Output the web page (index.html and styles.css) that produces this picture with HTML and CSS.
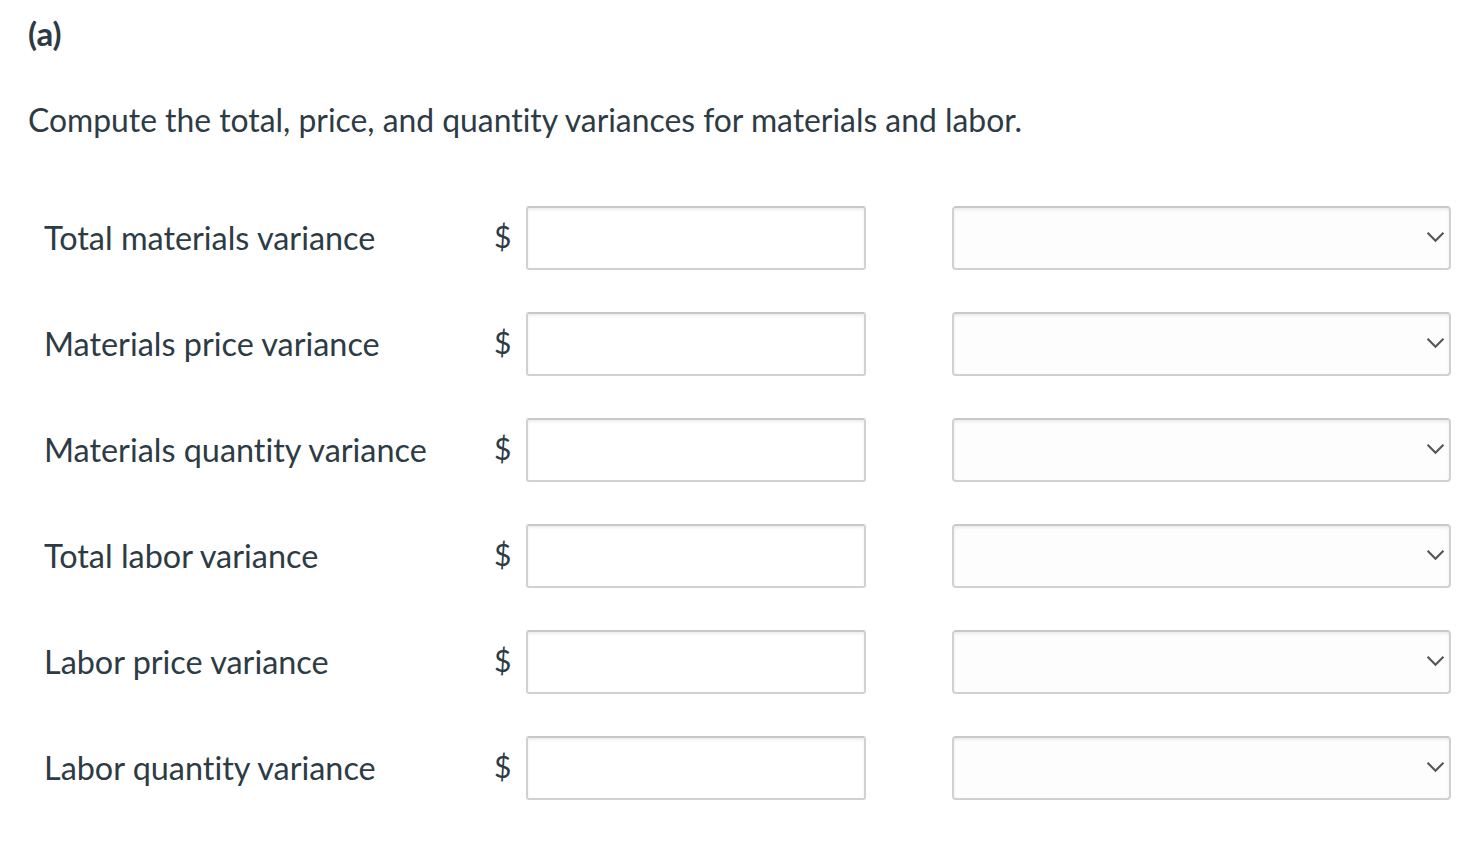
FILE: index.html
```html
<!DOCTYPE html>
<html>
<head>
<meta charset="utf-8">
<link rel="stylesheet" href="styles.css">
</head>
<body>
<div class="page">
  <div class="part">(a)</div>
  <p class="question">Compute the total, price, and quantity variances for materials and labor.</p>
  <div class="rows">
    <div class="row">
      <div class="label">Total materials variance</div>
      <div class="dollar">$</div>
      <div class="input"></div>
      <div class="select"><svg class="chev" viewBox="0 0 18 11"><path d="M1.5 1.5 L9 9 L16.5 1.5" /></svg></div>
    </div>
    <div class="row">
      <div class="label">Materials price variance</div>
      <div class="dollar">$</div>
      <div class="input"></div>
      <div class="select"><svg class="chev" viewBox="0 0 18 11"><path d="M1.5 1.5 L9 9 L16.5 1.5" /></svg></div>
    </div>
    <div class="row">
      <div class="label">Materials quantity variance</div>
      <div class="dollar">$</div>
      <div class="input"></div>
      <div class="select"><svg class="chev" viewBox="0 0 18 11"><path d="M1.5 1.5 L9 9 L16.5 1.5" /></svg></div>
    </div>
    <div class="row">
      <div class="label">Total labor variance</div>
      <div class="dollar">$</div>
      <div class="input"></div>
      <div class="select"><svg class="chev" viewBox="0 0 18 11"><path d="M1.5 1.5 L9 9 L16.5 1.5" /></svg></div>
    </div>
    <div class="row">
      <div class="label">Labor price variance</div>
      <div class="dollar">$</div>
      <div class="input"></div>
      <div class="select"><svg class="chev" viewBox="0 0 18 11"><path d="M1.5 1.5 L9 9 L16.5 1.5" /></svg></div>
    </div>
    <div class="row">
      <div class="label">Labor quantity variance</div>
      <div class="dollar">$</div>
      <div class="input"></div>
      <div class="select"><svg class="chev" viewBox="0 0 18 11"><path d="M1.5 1.5 L9 9 L16.5 1.5" /></svg></div>
    </div>
  </div>
</div>
</body>
</html>
```
FILE: styles.css
```css
html, body {
  margin: 0;
  padding: 0;
  background: #ffffff;
}
.page {
  font-family: Lato, "Open Sans", sans-serif;
  color: #2d3b45;
  padding: 15px 0 0 28px;
  font-variant-ligatures: none;
}
.part {
  font-size: 33px;
  line-height: 36px;
  font-weight: 700;
}
.question {
  margin: 49px 0 0 0;
  font-size: 31.85px;
  line-height: 40px;
}
.rows {
  margin-top: 66px;
  display: flex;
  flex-direction: column;
  gap: 42px;
}
.row {
  display: flex;
  align-items: center;
  height: 64px;
}
.label {
  width: 450px;
  padding-left: 16px;
  font-size: 32.4px;
  line-height: 40px;
}
.dollar {
  width: 32px;
  font-size: 30px;
  line-height: 40px;
  margin-top: -4px;
}
.input {
  box-sizing: border-box;
  width: 340px;
  height: 64px;
  border: 2px solid #cfd2d4;
  border-top-color: #c6c9cb;
  border-radius: 3px;
  background: #ffffff;
  box-shadow: inset 0 2px 3px rgba(0, 0, 0, 0.07);
}
.select {
  box-sizing: border-box;
  width: 499px;
  height: 64px;
  margin-left: 86px;
  border: 2px solid #cfd2d4;
  border-top-color: #c6c9cb;
  border-radius: 4px;
  background: #fdfdfd;
  box-shadow: inset 0 2px 3px rgba(0, 0, 0, 0.07);
  display: flex;
  align-items: center;
  justify-content: flex-end;
  padding-right: 4px;
}
.chev {
  width: 19px;
  height: 12px;
  margin-top: -2px;
}
.chev path {
  fill: none;
  stroke: #555555;
  stroke-width: 2;
}
```
